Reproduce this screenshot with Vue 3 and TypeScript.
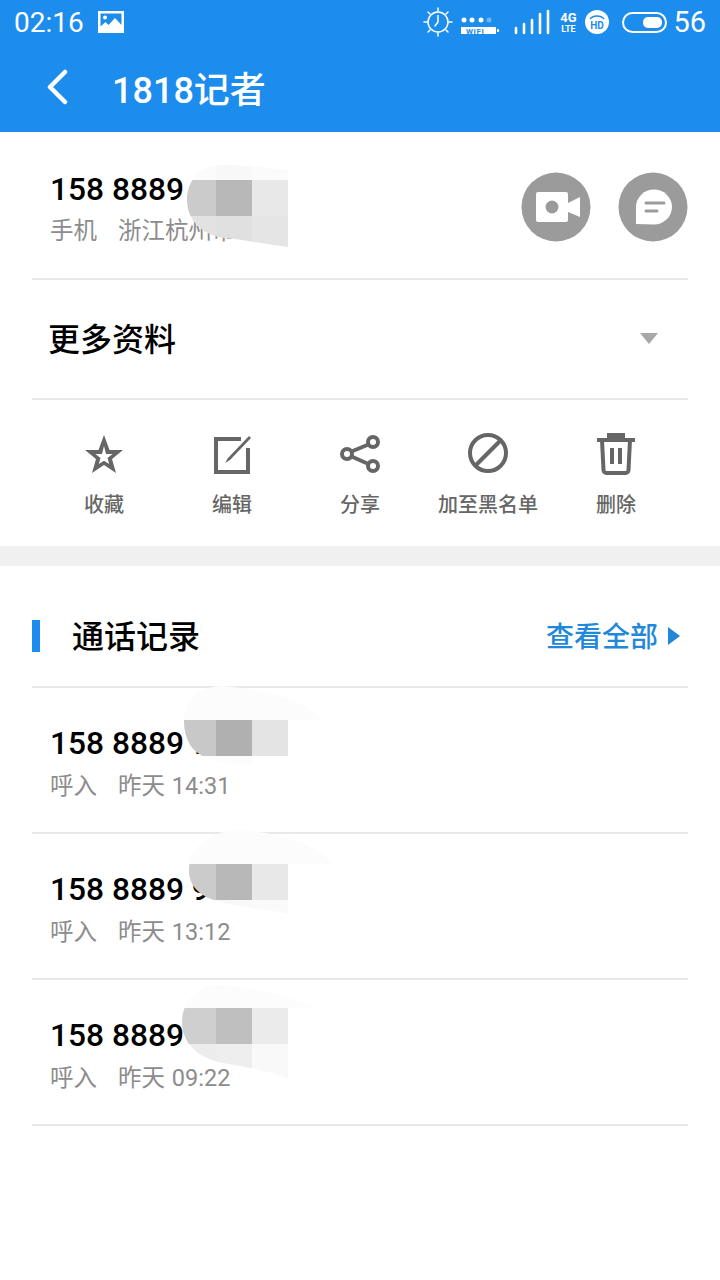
<template>
  <div class="page">
    <header class="header">
      <div class="status">
        <span class="time">02:16</span>
        <svg class="st-img" width="26" height="22" viewBox="0 0 26 22">
          <path fill="#fff" fill-rule="evenodd" d="M0 0h26v22H0zM2.500 2.500v13l5-4.500 3 3 6.500-7 6.500 7v-11.500z" />
          <circle cx="7" cy="6.500" r="2" fill="#fff" />
        </svg>
        <div class="status-right">
          <svg class="st-clock" width="30" height="30" viewBox="0 0 30 30" fill="none" stroke="#fff" stroke-width="1.500">
            <circle cx="15" cy="15" r="10" />
            <path d="M15 8.500V15l-3 4M15 1v3M15 26v3M1 15h3M26 15h3M5 5l2 2M25 5l-2 2M5 25l2-2M25 25l-2-2" stroke-linecap="round" />
          </svg>
          <svg class="st-wifi" width="40" height="20" viewBox="0 0 40 20">
            <circle cx="4" cy="5" r="2.500" fill="#fff" />
            <circle cx="12" cy="5" r="2.500" fill="#fff" />
            <circle cx="21" cy="5" r="2.500" fill="#fff" />
            <circle cx="29" cy="5" r="2.500" fill="#6db4f0" />
            <path fill="#fff" d="M1 12h35v7H1zM37 14h1.500l1 1.500-1 1.500H37z" />
            <text class="wifi-text" x="6" y="18.500">WIFI</text>
          </svg>
          <svg class="st-signal" width="36" height="26" viewBox="0 0 36 26" fill="none" stroke="#fff" stroke-width="2.600" stroke-linecap="round">
            <path d="M2 24v-5M10 24v-9M18 24v-13M26 24v-19M34 24V2" />
          </svg>
          <div class="lte"><span class="lte-4g">4G</span><span class="lte-sub">LTE</span></div>
          <svg class="st-hd" width="24" height="24" viewBox="0 0 24 24">
            <circle cx="12" cy="12" r="12" fill="#fff" />
            <path d="M5 9a8 6 0 0 1 14 0" fill="none" stroke="#1c8ced" stroke-width="1.500" />
            <text class="hd-text" x="12" y="18.500" text-anchor="middle">HD</text>
          </svg>
          <div class="battery"><span class="battery-fill"></span></div>
          <span class="level">56</span>
        </div>
      </div>
      <div class="nav">
        <svg width="24" height="36" viewBox="0 0 24 36" fill="none" stroke="#fff" stroke-width="4.500" stroke-linecap="round" stroke-linejoin="round">
          <path d="M21 3 6 18l15 15" />
        </svg>
        <span class="title">1818记者</span>
      </div>
    </header>

    <section class="contact">
      <div class="person">
        <div class="number">158 8889 9</div>
        <div class="sub"><span>手机</span><span>浙江杭州市</span></div>
        <svg class="smudge" width="200" height="150" viewBox="0 0 200 150">
          <g :clip-path="`url(#${smudges[0].id})`">
            <rect v-for="(c, i) in smudges[0].cells" :key="i" :x="c[0]" :y="c[1]" :width="c[2]" :height="c[3]" :fill="c[4]" />
          </g>
          <clipPath :id="smudges[0].id"><path :d="smudges[0].d" /></clipPath>
        </svg>
      </div>
      <div class="round-btn">
        <svg width="70" height="70" viewBox="0 0 70 70">
          <circle cx="35" cy="35" r="34.500" fill="#9b9b9b" />
          <rect x="15" y="20" width="32" height="30" rx="2" fill="#fff" />
          <circle cx="31" cy="35" r="6.500" fill="#9b9b9b" />
          <path fill="#fff" d="M47 31l12-6v20l-12-5z" />
        </svg>
      </div>
      <div class="round-btn">
        <svg width="70" height="70" viewBox="0 0 70 70">
          <circle cx="35" cy="35" r="34.500" fill="#9b9b9b" />
          <path fill="#fff" d="M18 52V35a18 17.500 0 1 1 18 17.500z" />
          <path stroke="#9b9b9b" stroke-width="3" stroke-linecap="round" d="M28 31h18M28 39h11" />
        </svg>
      </div>
    </section>

    <section class="more">
      <span class="more-title">更多资料</span>
      <span class="more-arrow"></span>
    </section>

    <section class="actions">
      <div class="action">
        <svg width="48" height="48" viewBox="0 0 48 48">
          <path fill="#666" fill-rule="evenodd" d="M24 4l5.500 15H43L32 28l4 14-12-8-12 8 4-14L5 19h13.500zM24 15l-2 8h-6.500l5 4-1.700 6 5.200-3.200 5.200 3.200-1.700-6 5-4h-6.500z" />
        </svg>
        <span>收藏</span>
      </div>
      <div class="action">
        <svg width="48" height="48" viewBox="0 0 48 48" fill="none" stroke="#666" stroke-width="4">
          <path d="M33 8H8v33h32V17" />
          <path d="M41 5l2 2L22 29l-5 3 3-5z" fill="#666" stroke="none" />
        </svg>
        <span>编辑</span>
      </div>
      <div class="action">
        <svg width="48" height="48" viewBox="0 0 48 48" fill="none" stroke="#666" stroke-width="4">
          <circle cx="37" cy="11" r="5" />
          <circle cx="37" cy="35" r="5" />
          <circle cx="11" cy="23" r="5" />
          <path d="M15.500 20.500 32.500 13.500M15.500 25.500 32.500 33" />
        </svg>
        <span>分享</span>
      </div>
      <div class="action">
        <svg width="48" height="48" viewBox="0 0 48 48" fill="none" stroke="#666" stroke-width="4">
          <circle cx="24" cy="22" r="18" />
          <path d="M11 35 37 9" />
        </svg>
        <span>加至黑名单</span>
      </div>
      <div class="action">
        <svg width="48" height="48" viewBox="0 0 48 48" fill="none" stroke="#666" stroke-width="4">
          <path d="M5 9h38" />
          <path d="M17 7V4h14v3" fill="#666" />
          <path d="M10 9l1.500 30a3 3 0 0 0 3 3h19a3 3 0 0 0 3-3L38 9" />
          <path d="M20 17v16M28 17v16" />
        </svg>
        <span>删除</span>
      </div>
    </section>

    <div class="band"></div>

    <section class="records-head">
      <span class="mark"></span>
      <span class="records-title">通话记录</span>
      <span class="see-all">查看全部</span>
      <span class="see-arrow"></span>
    </section>

    <section v-for="(r, n) in records" :key="r.time" class="record">
      <div class="number">158 8889 9</div>
      <div class="sub"><span>呼入</span><span>昨天 {{ r.time }}</span></div>
      <svg class="smudge" width="200" height="150" viewBox="0 0 200 150">
        <g :clip-path="`url(#${smudges[n + 1].id})`">
          <rect v-for="(c, i) in smudges[n + 1].cells" :key="i" :x="c[0]" :y="c[1]" :width="c[2]" :height="c[3]" :fill="c[4]" />
        </g>
        <clipPath :id="smudges[n + 1].id"><path :d="smudges[n + 1].d" /></clipPath>
      </svg>
    </section>
  </div>
</template>

<script setup lang="ts">
type Cell = [number, number, number, number, string]

const records = [{ time: '14:31' }, { time: '13:12' }, { time: '09:22' }]

// the blurred-out part of each phone number
const smudges: { id: string; d: string; cells: Cell[] }[] = [
  {
    id: 'sm0',
    d: 'M7 68C7 48 20 33 45 33C65 33 90 36 108 38L108 115C85 112 65 108 45 106C25 104 7 90 7 68Z',
    cells: [
      [0, 12, 36, 36, '#fbfbfb'], [36, 12, 36, 36, '#f8f8f8'], [72, 12, 36, 36, '#fbfbfb'],
      [0, 48, 36, 36, '#cbcbcb'], [36, 48, 36, 36, '#b8b8b8'], [72, 48, 36, 36, '#e8e8e8'],
      [0, 84, 36, 36, '#e2e2e2'], [36, 84, 36, 36, '#e0e0e0'], [72, 84, 36, 36, '#e5e5e5'],
    ],
  },
  {
    id: 'sm1',
    d: 'M4 34C4 12 20 -2 42 -2C90 2 125 12 142 32L108 32L108 68L72 68L72 77C45 77 20 72 10 57C6 50 4 42 4 34Z',
    cells: [
      [0, -4, 150, 36, '#fcfcfc'],
      [0, 32, 36, 36, '#c8c8c8'], [36, 32, 36, 36, '#b0b0b0'], [72, 32, 36, 36, '#e4e4e4'],
      [0, 68, 108, 14, '#fcfcfc'],
    ],
  },
  {
    id: 'sm2',
    d: 'M9 36C9 14 30 -4 60 -4C100 -2 140 12 152 30L108 30L108 80C90 76 72 74 50 70C25 66 9 56 9 36Z',
    cells: [
      [0, -6, 160, 36, '#fcfcfc'],
      [0, 30, 36, 36, '#cbcbcb'], [36, 30, 36, 36, '#b8b8b8'], [72, 30, 36, 36, '#e8e8e8'],
      [0, 66, 72, 14, '#f8f8f8'], [72, 66, 36, 14, '#fafafa'],
    ],
  },
  {
    id: 'sm3',
    d: 'M2 42C2 20 20 5 40 5C75 8 115 18 135 28L108 28L108 98C90 92 72 88 55 85C25 82 2 68 2 42Z',
    cells: [
      [0, 0, 140, 28, '#fcfcfc'],
      [0, 28, 36, 36, '#cfcfcf'], [36, 28, 36, 36, '#bfbfbf'], [72, 28, 36, 36, '#ebebeb'],
      [0, 64, 36, 36, '#ececec'], [36, 64, 36, 36, '#eeeeee'], [72, 64, 36, 36, '#f9f9f9'],
    ],
  },
]
</script>

<style>
html,
body {
  margin: 0;
  background: #fff;
}
</style>

<style scoped>
.page {
  width: 720px;
  height: 1280px;
  overflow: hidden;
  background: #fff;
  font-family: Roboto, "Noto Sans CJK SC", sans-serif;
}

.header {
  height: 132px;
  background: #1c8ced;
  color: #fff;
}

.status {
  display: flex;
  align-items: center;
  height: 44px;
  padding-left: 14px;
}

.time {
  font-size: 28px;
  width: 84px;
}

.status-right {
  display: flex;
  align-items: center;
  margin-left: auto;
  padding-right: 14px;
}

.st-clock {
  margin-right: 7px;
}

.st-wifi {
  margin-top: 6px;
  margin-right: 14px;
}

.wifi-text {
  font-size: 8px;
  font-weight: 700;
  fill: #1c8ced;
  letter-spacing: 0.6px;
}

.st-signal {
  margin-right: 9px;
}

.lte {
  display: flex;
  flex-direction: column;
  align-items: center;
  width: 18px;
  font-weight: 700;
  line-height: 1;
  margin-right: 8px;
}

.lte-4g {
  font-size: 13px;
}

.lte-sub {
  font-size: 9px;
  margin-top: 1px;
}

.st-hd {
  margin-right: 13px;
}

.hd-text {
  font-size: 10px;
  font-weight: 700;
  fill: #1c8ced;
}

.battery {
  box-sizing: border-box;
  width: 45px;
  height: 21px;
  border: 2px solid #fff;
  border-radius: 11px;
  padding: 3px 3px 3px 19px;
  margin-right: 6px;
}

.battery-fill {
  display: block;
  height: 11px;
  border-radius: 5px;
  background: #fff;
}

.level {
  font-size: 29px;
}

.nav {
  display: flex;
  align-items: center;
  height: 88px;
  padding-left: 44px;
  box-sizing: border-box;
  padding-bottom: 2px;
}

.title {
  font-size: 36px;
  font-weight: 500;
  margin-left: 44px;
}

.contact,
.more,
.records-head,
.record {
  margin: 0 32px;
  border-bottom: 2px solid #e8e8e8;
  box-sizing: border-box;
}

.contact {
  display: flex;
  align-items: center;
  gap: 27px;
  height: 148px;
  padding-top: 4px;
}

.person {
  flex: 1;
  position: relative;
  padding-left: 18px;
  margin-top: 5px;
}

.number {
  font-size: 31.700px;
  font-weight: 500;
  line-height: 40px;
  color: #000;
  white-space: nowrap;
}

.sub {
  display: flex;
  gap: 21px;
  font-size: 23.500px;
  word-spacing: 1px;
  line-height: 36px;
  margin-top: 4px;
  color: #8c8c8c;
}

.person .sub {
  margin-top: 3px;
}

.round-btn {
  height: 70px;
}

.smudge {
  position: absolute;
  left: 148px;
  top: 0;
  overflow: visible;
}

.person .smudge {
  top: -38px;
}

.more {
  display: flex;
  align-items: center;
  justify-content: space-between;
  height: 120px;
  padding: 0 30px 4px 16px;
}

.more-title,
.records-title {
  font-size: 32px;
  font-weight: 500;
  color: #000;
}

.more-arrow {
  width: 0;
  height: 0;
  margin-top: 2px;
  border-left: 9px solid transparent;
  border-right: 9px solid transparent;
  border-top: 11px solid #a8a8a8;
}

.actions {
  display: grid;
  grid-template-columns: repeat(5, 128px);
  justify-content: center;
  height: 146px;
  padding-top: 31px;
  box-sizing: border-box;
}

.action {
  display: flex;
  flex-direction: column;
  align-items: center;
  gap: 11px;
  font-size: 20px;
  font-weight: 500;
  line-height: 30px;
  color: #666;
}

.action svg {
  display: block;
}

.band {
  height: 20px;
  background: #f0f0f0;
}

.records-head {
  display: flex;
  align-items: center;
  height: 122px;
  padding-top: 20px;
}

.mark {
  width: 8px;
  height: 32px;
  background: #1c8ced;
}

.records-title {
  margin-left: 32px;
  margin-bottom: 4px;
}

.see-all {
  margin-left: auto;
  margin-bottom: 2px;
  font-size: 28px;
  font-weight: 500;
  color: #1f88d9;
}

.see-arrow {
  width: 0;
  height: 0;
  margin: 0 8px 0 10px;
  border-top: 9px solid transparent;
  border-bottom: 9px solid transparent;
  border-left: 12px solid #1f88d9;
}

.record {
  position: relative;
  height: 146px;
  padding: 36px 0 0 18px;
}
</style>
